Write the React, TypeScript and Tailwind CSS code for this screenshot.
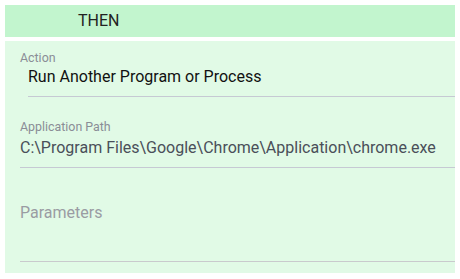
export default function App() {
  return (
    <div
      className="w-[460px] h-[279px] bg-white pt-[5px] px-[5px] overflow-hidden"
      style={{ fontFamily: 'Roboto, "Noto Sans", sans-serif' }}
    >
      <div className="h-[32px] bg-[#c2f5ce] flex items-center pl-[73px]">
        <span className="text-[16px] leading-[20px] text-[#222]">THEN</span>
      </div>
      <div className="mt-[4px] h-[232px] bg-[#e1fae6] pl-[15px] pt-[10px]">
        <div className="h-[14px] text-[12.4px] leading-[14px] text-[#8a8d96]">Action</div>
        <div className="ml-[8px]">
          <div className="mt-[2px] h-[20px] text-[16px] leading-[20px] text-[#111]">
            Run Another Program or Process
          </div>
          <div className="mt-[9px] h-px bg-[#c6c9d3]" />
        </div>
        <div className="mt-[23px] h-[14px] text-[12.4px] leading-[14px] text-[#8a8d96]">
          Application Path
        </div>
        <div className="mt-[4px] h-[20px] text-[16px] leading-[20px] text-[#4a4f59]">
          C:\Program Files\Google\Chrome\Application\chrome.exe
        </div>
        <div className="mt-[9px] h-px bg-[#c6c9d3]" />
        <div className="mt-[35px] h-[20px] text-[16px] leading-[20px] text-[#9a9ca3]">
          Parameters
        </div>
        <div className="mt-[38px] h-px bg-[#c9cacd]" />
      </div>
    </div>
  );
}
